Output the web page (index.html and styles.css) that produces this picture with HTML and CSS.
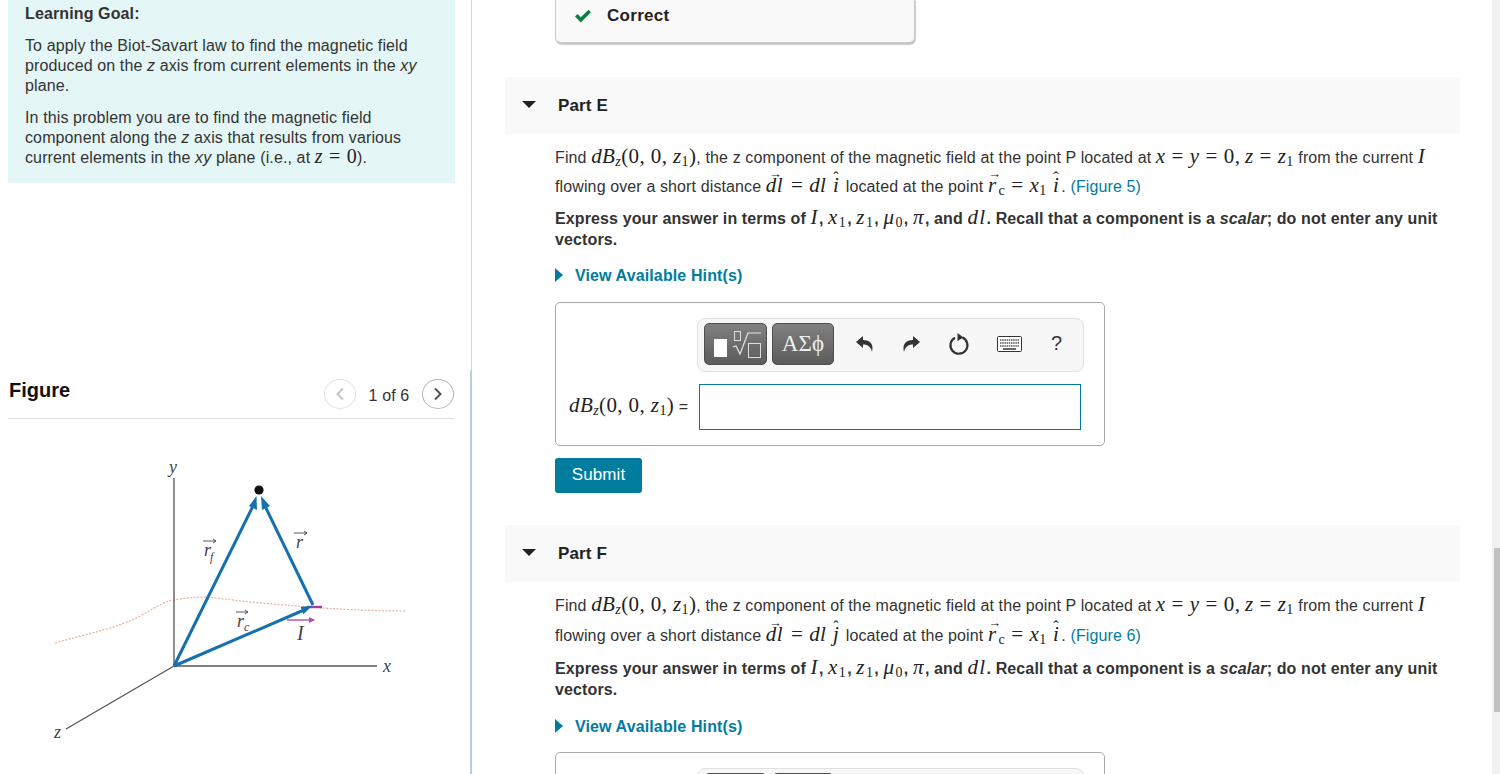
FILE: index.html
```html
<!DOCTYPE HTML>
<html>
<head>
	<title>Biot-Savart law</title>
	<meta charset="utf-8">
	<link rel="stylesheet" href="styles.css">
</head>
<body>
<div id="page">

	<div id="sidebar">
		<div class="goal-pane">
			<div class="goal">
				<div class="goal-title">Learning Goal:</div>
				<p>To apply the Biot-Savart law to find the magnetic field produced on the <i>z</i> axis from current elements in the <i>xy</i> plane.</p>
				<p>In this problem you are to find the magnetic field component along the <i>z</i> axis that results from various current elements in the <i>xy</i> plane (i.e., at <span class="m">z</span><span class="mr eq">=</span><span class="mr">0</span>).</p>
			</div>
		</div>
		<div class="figure-pane">
			<div class="figure-head">
				<div class="figure-title">Figure</div>
				<div class="pager">
					<span class="pager-btn off"><svg width="10" height="14" viewBox="0 0 10 14"><path d="M8 1.500 2.500 7 8 12.500" fill="none" stroke="#c4c4c4" stroke-width="2"/></svg></span>
					<span class="pager-count">1 of 6</span>
					<span class="pager-btn"><svg width="10" height="14" viewBox="0 0 10 14"><path d="M2 1.500 7.500 7 2 12.500" fill="none" stroke="#555" stroke-width="2"/></svg></span>
				</div>
			</div>
			<svg class="diagram" width="447" height="355" viewBox="8 419 447 355">
				<path d="M55 643C90 633 118 628 140 616S165 601 174 600C190 597 205 596 225 599S285 605 310 607 370 611 405 611" fill="none" stroke="#e8b095" stroke-width="1.200" stroke-dasharray="2 1.500"/>
				<path d="M174 666V478M174 666H377M174 666 66 729" fill="none" stroke="#555" stroke-width="1.300"/>
				<path d="M307 607H322" stroke="#a63ea8" stroke-width="2.400"/>
				<path d="M287 620H314" stroke="#b04db5" stroke-width="1.400"/>
				<path d="M309 617 315 620 309 623z" fill="#b04db5"/>
				<path d="M174 666 254 504M313 605 264 504M174 666 304 610" fill="none" stroke="#1670ad" stroke-width="3"/>
				<path d="M256.500 496 249 506 257 510zM261 496 262 510 270 506zM312 606 300.600 606.800 303.400 614.200z" fill="#1670ad"/>
				<circle cx="259" cy="490" r="4.600" fill="#111"/>
				<g fill="none" stroke="#444" stroke-width="0.900">
					<path d="M203 541H216M213 539 216 541 213 543"/>
					<path d="M294 533H307M304 531 307 533 304 535"/>
					<path d="M236 612H248M245 610 248 612 245 614"/>
				</g>
				<text class="fig-label" x="169" y="473">y</text>
				<text class="fig-label" x="383" y="672">x</text>
				<text class="fig-label" x="54" y="738">z</text>
				<text class="fig-label" x="204" y="556">r</text>
				<text class="fig-sub" x="210" y="561">f</text>
				<text class="fig-label" x="296" y="548">r</text>
				<text class="fig-label" x="237" y="627">r</text>
				<text class="fig-sub" x="244" y="631">c</text>
				<text class="fig-label fig-big" x="297" y="640">I</text>
			</svg>
		</div>
	</div>

	<div id="main">
		<div class="correct">
			<svg width="18" height="14" viewBox="0 0 18 14"><path d="M1 7.500 3.500 5 6.800 8.200 14.500 .8 17 3.200 6.800 13.400z" fill="#0a8045"/></svg>
			<span>Correct</span>
		</div>

		<div class="part">
			<div class="part-head"><span class="caret"></span>Part E</div>
			<div class="part-body">
				<div class="line">Find <span class="m">dB<sub>z</sub></span><span class="mr">(0, 0, </span><span class="m">z</span><span class="mr"><sub>1</sub>)</span>, the z component of the magnetic field at the point P located at <span class="m">x</span><span class="mr eq">=</span><span class="m">y</span><span class="mr eq">=</span><span class="mr">0,</span> <span class="m">z</span><span class="mr eq">=</span><span class="m">z</span><span class="mr"><sub>1</sub></span> from the current <span class="m">I</span></div>
				<div class="line">flowing over a short distance <span class="m vec">dl</span><span class="mr eq">=</span><span class="m">dl</span> <span class="m hat">i</span> located at the point <span class="m vec">r</span><span class="mr"><sub>c</sub></span><span class="mr eq">=</span><span class="m">x</span><span class="mr"><sub>1</sub></span> <span class="m hat">i</span>. <a href="#">(Figure 5)</a></div>
				<div class="ask"><b>Express your answer in terms of <span class="m">I</span>, <span class="m">x</span><span class="mr"><sub>1</sub></span>, <span class="m">z</span><span class="mr"><sub>1</sub></span>, <span class="m">μ</span><span class="mr"><sub>0</sub></span>, <span class="m">π</span>, and <span class="m">dl</span>. Recall that a component is a <i>scalar</i>; do not enter any unit vectors.</b></div>
				<div class="hint"><span class="hint-arrow"></span><a href="#">View Available Hint(s)</a></div>
				<div class="answer">
					<div class="toolbar">
						<span class="tool-btn tpl">
							<svg width="61" height="40" viewBox="0 0 61 40">
								<rect x="9" y="15" width="13" height="18" fill="#fff"/>
								<path d="M28 23 31 22 35 30 43 9H56" fill="none" stroke="#e6e6e6" stroke-width="1.200"/>
								<rect x="29.500" y="7.500" width="6" height="9" fill="none" stroke="#ddd"/>
								<rect x="43.500" y="19.500" width="12" height="14" fill="none" stroke="#ddd"/>
							</svg>
						</span>
						<span class="tool-btn sym">ΑΣϕ</span>
						<span class="tool-icons">
							<svg width="20" height="20" viewBox="0 0 20 20"><path d="M1 8 8 2V6C15 6 19 10 17 18 16 13 13 10.500 8 10.500V14z" fill="#333"/></svg>
							<svg width="20" height="20" viewBox="0 0 20 20"><path d="M19 8 12 2V6C5 6 1 10 3 18 4 13 7 10.500 12 10.500V14z" fill="#333"/></svg>
							<svg width="24" height="24" viewBox="0 0 24 24"><path d="M15.500 5.500A8.500 8.500 0 1 1 8 5.700" fill="none" stroke="#333" stroke-width="2.200"/><path d="M10.500 1 16.500 5.500 10.500 9z" fill="#333"/></svg>
							<svg width="25" height="16" viewBox="0 0 25 16"><rect x=".5" y=".5" width="24" height="15" rx="1" fill="#fff" stroke="#333"/><path d="M3 4H22M3 7H22M3 10H22" stroke="#555" stroke-width="1.600" stroke-dasharray="1.500 .7"/><path d="M6 13H19" stroke="#333" stroke-width="1.500"/></svg>
							<span class="tool-q">?</span>
						</span>
					</div>
					<div class="answer-row">
						<span class="answer-label"><span class="m">dB<sub>z</sub></span><span class="mr">(0, 0, </span><span class="m">z</span><span class="mr"><sub>1</sub>)</span> =</span>
						<span class="answer-input"></span>
					</div>
				</div>
				<div class="submit">Submit</div>
			</div>
		</div>

		<div class="part part-f">
			<div class="part-head"><span class="caret"></span>Part F</div>
			<div class="part-body">
				<div class="line">Find <span class="m">dB<sub>z</sub></span><span class="mr">(0, 0, </span><span class="m">z</span><span class="mr"><sub>1</sub>)</span>, the z component of the magnetic field at the point P located at <span class="m">x</span><span class="mr eq">=</span><span class="m">y</span><span class="mr eq">=</span><span class="mr">0,</span> <span class="m">z</span><span class="mr eq">=</span><span class="m">z</span><span class="mr"><sub>1</sub></span> from the current <span class="m">I</span></div>
				<div class="line tall">flowing over a short distance <span class="m vec">dl</span><span class="mr eq">=</span><span class="m">dl</span> <span class="m hat">j</span> located at the point <span class="m vec">r</span><span class="mr"><sub>c</sub></span><span class="mr eq">=</span><span class="m">x</span><span class="mr"><sub>1</sub></span> <span class="m hat">i</span>. <a href="#">(Figure 6)</a></div>
				<div class="ask"><b>Express your answer in terms of <span class="m">I</span>, <span class="m">x</span><span class="mr"><sub>1</sub></span>, <span class="m">z</span><span class="mr"><sub>1</sub></span>, <span class="m">μ</span><span class="mr"><sub>0</sub></span>, <span class="m">π</span>, and <span class="m">dl</span>. Recall that a component is a <i>scalar</i>; do not enter any unit vectors.</b></div>
				<div class="hint"><span class="hint-arrow"></span><a href="#">View Available Hint(s)</a></div>
				<div class="answer">
					<div class="toolbar">
						<span class="tool-btn tpl"></span>
						<span class="tool-btn sym"></span>
					</div>
				</div>
			</div>
		</div>
	</div>

	<div id="scrollbar"><div id="scroll-thumb"></div></div>
</div>
</body>
</html>
```

FILE: styles.css
```css
* {box-sizing: border-box;}

html, body {
	height: 100%;
	overflow: hidden;
}

body {
	margin: 0;
	font-family: "Liberation Sans", Arial, sans-serif;
	font-size: 16px;
	line-height: 20px;
	letter-spacing: .12px;
	color: #333;
	background-color: white;
}

a {
	color: #007c9e;
	text-decoration: none;
}

#page {
	display: flex;
	height: 774px;
	overflow: hidden;
}

/* left column */
#sidebar {
	width: 472px;
	flex: none;
	display: flex;
	flex-direction: column;
}

.goal-pane {
	height: 370px;
	padding-left: 8px;
	padding-right: 16px;
	border-right: 1px solid #d3d8de;
}

.goal {
	background-color: #e5f6f7;
	padding: 4px 16px 16px 17px;
	height: 183px;
}

.goal-title {
	font-weight: bold;
}

.goal p {
	margin: 12px 0 0;
}

.figure-pane {
	flex: 1;
	padding-left: 8px;
	padding-right: 16px;
	border-right: 2px solid #b9cde3;
}

.figure-head {
	display: flex;
	justify-content: space-between;
	height: 49px;
	border-bottom: 1px solid #dcdfe3;
	width: 446px;
}

.figure-title {
	font-size: 20px;
	font-weight: bold;
	letter-spacing: 0;
	color: #111;
	padding: 10px 0 0 1px;
}

.pager {
	display: flex;
	align-items: center;
	height: 32px;
	margin-top: 8px;
}

.pager-btn {
	display: flex;
	align-items: center;
	justify-content: center;
	width: 32px;
	height: 30px;
	border: 1px solid #b5b5b5;
	border-radius: 50%;
}

.pager-btn.off {
	border-color: #e2e2e2;
}

.pager-count {
	width: 66px;
	text-align: center;
	padding-top: 3px;
}

.diagram {
	display: block;
}

.fig-label {
	font-family: "Liberation Serif", serif;
	font-style: italic;
	font-size: 18px;
	fill: #444;
}

.fig-big {
	font-size: 20px;
}

.fig-sub {
	font-family: "Liberation Serif", serif;
	font-style: italic;
	font-size: 12px;
	fill: #444;
}

/* right column */
#main {
	width: 955px;
	flex: none;
	margin-left: 33px;
}

.correct {
	display: flex;
	align-items: center;
	gap: 15px;
	width: 360px;
	height: 44px;
	margin-left: 50px;
	padding: 0 18px 11px;
	background-color: #f9f9f9;
	border: 1px solid #c8c8c8;
	border-top: 0;
	border-bottom-width: 2px;
	border-radius: 0 0 6px 6px;
	font-size: 17px;
	font-weight: bold;
	letter-spacing: .3px;
	color: #222;
	box-shadow: 1px 1px 1px #ccc;
}

.part {
	margin-top: 33px;
}

.part-f {
	margin-top: 32px;
}

.part-head {
	display: flex;
	align-items: center;
	height: 57px;
	padding-left: 17px;
	background-color: #f9f9f9;
	font-size: 17px;
	font-weight: bold;
	color: #222;
}

.caret {
	width: 0;
	height: 0;
	margin-right: 22px;
	margin-top: -2px;
	border-left: 7px solid transparent;
	border-right: 7px solid transparent;
	border-top: 7px solid #222;
}

.part-body {
	padding: 9px 0 0 50px;
}

.line {
	height: 29px;
	line-height: 29px;
	white-space: nowrap;
}

.line.tall {
	height: 31px;
	line-height: 31px;
}

.ask {
	margin-top: 7px;
	line-height: 21px;
	width: 890px;
}

.ask .m, .ask .mr {
	letter-spacing: 1.4px;
}

.hint {
	display: flex;
	align-items: center;
	margin-top: 16px;
	height: 20px;
	font-weight: bold;
}

.hint-arrow {
	width: 0;
	height: 0;
	margin-right: 12px;
	margin-top: -3px;
	border-top: 7px solid transparent;
	border-bottom: 7px solid transparent;
	border-left: 8px solid #007c9e;
}

.part-f .hint {
	margin-top: 17px;
}

.answer {
	width: 550px;
	height: 144px;
	margin-top: 16px;
	padding: 15px 20px 0 13px;
	border: 1px solid #aaa;
	border-radius: 5px;
}

.part-f .answer {
	margin-top: 15px;
}

.toolbar {
	display: flex;
	align-items: flex-start;
	gap: 5px;
	width: 387px;
	height: 54px;
	margin-left: 128px;
	padding: 4px 0 0 6px;
	background-color: #f7f7f7;
	border: 1px solid #e0e0e0;
	border-radius: 8px;
}

.tool-btn {
	display: flex;
	align-items: center;
	justify-content: center;
	height: 42px;
	background: linear-gradient(#808080, #5c5c5c);
	border: 1px solid #4e4e4e;
	border-radius: 5px;
	color: #eee;
}

.tpl {
	width: 63px;
}

.sym {
	width: 62px;
	font-family: "Liberation Serif", serif;
	font-size: 23px;
}

.tool-icons {
	display: flex;
	align-items: center;
	height: 42px;
	margin-left: 16px;
	flex: 1;
}

.tool-icons svg {
	margin-right: 26px;
}

.tool-icons svg:nth-child(4) {
	margin-right: 22px;
}

.tool-q {
	font-size: 20px;
	margin-left: 7px;
	margin-top: -3px;
}

.answer-row {
	display: flex;
	align-items: center;
	gap: 6px;
	margin-top: 12px;
}

.answer-label {
	white-space: nowrap;
}

.answer-input {
	width: 382px;
	height: 46px;
	margin-left: auto;
	margin-right: 3px;
	border: 1px solid #007c9e;
}

.submit {
	width: 87px;
	height: 35px;
	margin-top: 12px;
	background-color: #007c9f;
	border-radius: 3px;
	color: white;
	font-size: 17px;
	line-height: 34px;
	text-align: center;
}

/* math */
.m, .mr {
	font-family: "Liberation Serif", serif;
	font-size: 21px;
	font-weight: normal;
	line-height: 0;
	letter-spacing: .4px;
	color: #222;
}

.m {
	font-style: italic;
}

.goal .m, .goal .mr {
	font-size: 20px;
}

.eq {
	margin: 0 6px;
}

sub {
	font-size: 14px;
	line-height: 0;
	vertical-align: -3px;
}

.vec, .hat {
	position: relative;
	display: inline-block;
	line-height: 20px;
}

.vec {
	padding-right: 2px;
}

.hat {
	margin: 0 2px;
}

.vec::before {
	content: "\2192";
	position: absolute;
	left: 0;
	right: 0;
	top: -11px;
	text-align: center;
	font-size: 13px;
	font-style: normal;
}

.hat::before {
	content: "\02C6";
	position: absolute;
	left: 0;
	right: 0;
	top: -7px;
	text-align: center;
	font-style: normal;
	font-size: 16px;
}

/* fake scrollbar, window is not really scrolled */
#scrollbar {
	width: 8px;
	margin-left: auto;
	padding: 548px 0 0 2px;
	background-color: #f1f1f1;
}

#scroll-thumb {
	height: 164px;
	background-color: #c1c1c1;
}
```
